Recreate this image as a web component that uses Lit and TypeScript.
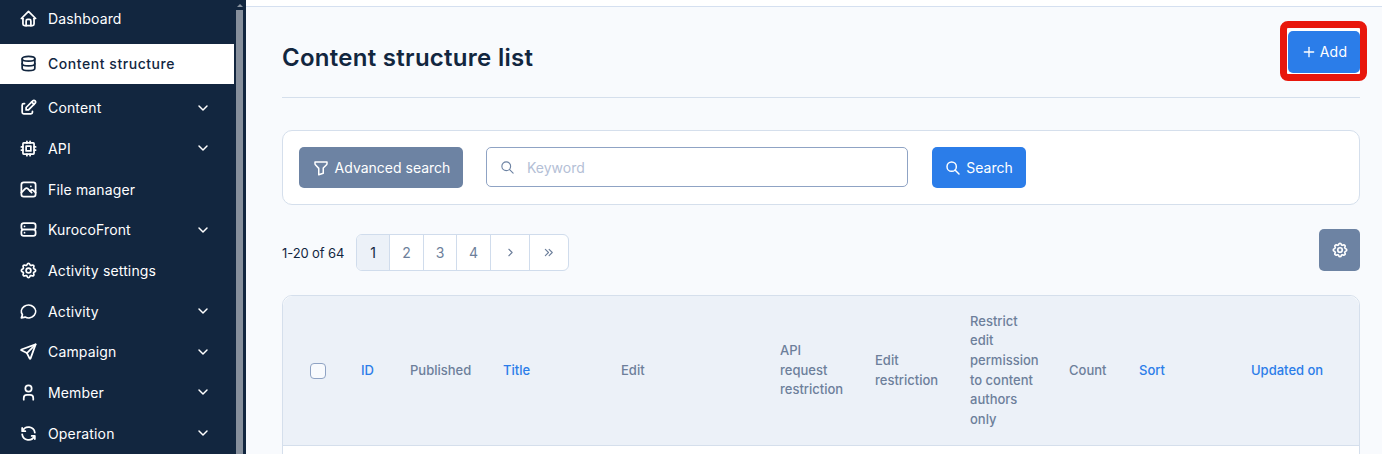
import { LitElement, html, css, svg } from "lit";
import { customElement } from "lit/decorators.js";

const P: Record<string, string[]> = {
  home: ["M5 12l-2 0l9 -9l9 9l-2 0", "M5 12v7a2 2 0 0 0 2 2h10a2 2 0 0 0 2 -2v-7", "M9 21v-6a2 2 0 0 1 2 -2h2a2 2 0 0 1 2 2v6"],
  database: ["M12 6m-8 0a8 3 0 1 0 16 0a8 3 0 1 0 -16 0", "M4 6v6a8 3 0 0 0 16 0v-6", "M4 12v6a8 3 0 0 0 16 0v-6"],
  edit: ["M7 7h-1a2 2 0 0 0 -2 2v9a2 2 0 0 0 2 2h9a2 2 0 0 0 2 -2v-1", "M20.385 6.585a2.1 2.1 0 0 0 -2.97 -2.97l-8.415 8.385v3h3l8.385 -8.415z", "M16 5l3 3"],
  cpu: ["M5 5m0 1a1 1 0 0 1 1 -1h12a1 1 0 0 1 1 1v12a1 1 0 0 1 -1 1h-12a1 1 0 0 1 -1 -1z", "M9 9h6v6h-6z", "M3 10h2", "M3 14h2", "M10 3v2", "M14 3v2", "M21 10h-2", "M21 14h-2", "M14 21v-2", "M10 21v-2"],
  photo: ["M15 8h.01", "M3 6a3 3 0 0 1 3 -3h12a3 3 0 0 1 3 3v12a3 3 0 0 1 -3 3h-12a3 3 0 0 1 -3 -3v-12z", "M3 16l5 -5c.928 -.893 2.072 -.893 3 0l5 5", "M14 14l1 -1c.928 -.893 2.072 -.893 3 0l3 3"],
  server: ["M3 4m0 3a3 3 0 0 1 3 -3h12a3 3 0 0 1 3 3v2a3 3 0 0 1 -3 3h-12a3 3 0 0 1 -3 -3z", "M3 12m0 3a3 3 0 0 1 3 -3h12a3 3 0 0 1 3 3v2a3 3 0 0 1 -3 3h-12a3 3 0 0 1 -3 -3z", "M7 8v.01", "M7 16v.01"],
  settings: ["M10.325 4.317c.426 -1.756 2.924 -1.756 3.35 0a1.724 1.724 0 0 0 2.573 1.066c1.543 -.94 3.31 .826 2.37 2.37a1.724 1.724 0 0 0 1.065 2.572c1.756 .426 1.756 2.924 0 3.35a1.724 1.724 0 0 0 -1.066 2.573c.94 1.543 -.826 3.31 -2.37 2.37a1.724 1.724 0 0 0 -2.572 1.065c-.426 1.756 -2.924 1.756 -3.35 0a1.724 1.724 0 0 0 -2.573 -1.066c-1.543 .94 -3.31 -.826 -2.37 -2.37a1.724 1.724 0 0 0 -1.065 -2.572c-1.756 -.426 -1.756 -2.924 0 -3.35a1.724 1.724 0 0 0 1.066 -2.573c-.94 -1.543 .826 -3.31 2.37 -2.37c1 .608 2.296 .07 2.572 -1.065z", "M9 12a3 3 0 1 0 6 0a3 3 0 0 0 -6 0"],
  message: ["M3 20l1.3 -3.9c-2.324 -3.437 -1.426 -7.872 2.1 -10.374c3.526 -2.501 8.59 -2.296 11.845 .48c3.255 2.777 3.695 7.266 1.029 10.501c-2.666 3.235 -7.615 4.215 -11.574 2.293l-4.7 1"],
  send: ["M10 14l11 -11", "M21 3l-6.5 18a.55 .55 0 0 1 -1 0l-3.5 -7l-7 -3.5a.55 .55 0 0 1 0 -1l18 -6.5"],
  user: ["M8 7a4 4 0 1 0 8 0a4 4 0 0 0 -8 0", "M6 21v-2a4 4 0 0 1 4 -4h4a4 4 0 0 1 4 4v2"],
  refresh: ["M20 11a8.1 8.1 0 0 0 -15.5 -2m-.5 -4v4h4", "M4 13a8.1 8.1 0 0 0 15.5 2m.5 4v-4h-4"],
  chevron: ["M6 9l6 6l6 -6"],
  filter: ["M4 4h16v2.172a2 2 0 0 1 -.586 1.414l-4.414 4.414v7l-6 2v-8.5l-4.48 -4.928a2 2 0 0 1 -.52 -1.345v-2.227z"],
  search: ["M10 10m-7 0a7 7 0 1 0 14 0a7 7 0 1 0 -14 0", "M21 21l-6 -6"],
  plus: ["M12 5v14", "M5 12h14"],
  next: ["M9 6l6 6l-6 6"],
  last: ["M7 7l5 5l-5 5", "M13 7l5 5l-5 5"],
};

const icon = (name: string, size: number, sw = 2) => html`<svg
  width=${size} height=${size} viewBox="0 0 24 24" fill="none" stroke="currentColor"
  stroke-width=${sw} stroke-linecap="round" stroke-linejoin="round">
  ${P[name].map((d) => svg`<path d=${d}></path>`)}
</svg>`;

const NAV: { label: string; icon: string; sub?: boolean; active?: boolean }[] = [
  { label: "Dashboard", icon: "home" },
  { label: "Content structure", icon: "database", active: true },
  { label: "Content", icon: "edit", sub: true },
  { label: "API", icon: "cpu", sub: true },
  { label: "File manager", icon: "photo" },
  { label: "KurocoFront", icon: "server", sub: true },
  { label: "Activity settings", icon: "settings" },
  { label: "Activity", icon: "message", sub: true },
  { label: "Campaign", icon: "send", sub: true },
  { label: "Member", icon: "user", sub: true },
  { label: "Operation", icon: "refresh", sub: true },
];

@customElement("app-root")
export class AppRoot extends LitElement {
  static styles = css`
    :host {
      display: flex;
      height: 100vh;
      overflow: hidden;
      background: #f8fafd;
      color: #12263f;
      font-family: Inter, "Liberation Sans", sans-serif;
      font-size: 14px;
    }
    * { box-sizing: border-box; }
    svg { display: block; flex: none; }

    .side {
      flex: none;
      width: 246px;
      background: #12263f;
      display: flex;
      overflow: hidden;
    }
    .nav {
      width: 234px;
      flex: none;
      margin-top: -1.7px;
      display: flex;
      flex-direction: column;
    }
    .item {
      flex: none;
      height: 40.67px;
      display: flex;
      align-items: center;
      padding: 0 23.5px 0 19px;
      color: #fff;
      letter-spacing: 0.15px;
    }
    .item .label { margin-left: 10px; flex: 1; }
    .item.active {
      background: #fff;
      color: #12263f;
      font-weight: 500;
      letter-spacing: 0.55px;
      height: 40px;
      margin: 4.7px 0 3.8px;
    }
    .item .chev { width: 16px; }
    .scroll {
      flex: none;
      width: 7px;
      margin-left: 2px;
      display: flex;
      flex-direction: column;
      align-items: center;
    }
    .arrow {
      flex: none;
      height: 10px;
      width: 100%;
      display: flex;
      align-items: center;
      justify-content: center;
    }
    .arrow i {
      border: 3px solid transparent;
      border-top: 0;
      border-bottom: 3px solid #8a93a0;
    }
    .thumb { flex: 1; width: 100%; background: #868f9c; }

    .main { flex: 1; min-width: 0; display: flex; flex-direction: column; }
    .top { flex: none; height: 7px; background: #fff; border-bottom: 1px solid #d5e0f0; }
    .body { padding: 0 22px 0 36px; display: flex; flex-direction: column; }
    .head {
      height: 91px;
      border-bottom: 1px solid #d5dfec;
      display: flex;
      align-items: center;
      justify-content: space-between;
    }
    h1 {
      margin: 10px 0 0;
      font-size: 24px;
      font-weight: 600;
      color: #12263f;
      letter-spacing: 0.28px;
    }
    .btn {
      display: inline-flex;
      align-items: center;
      justify-content: center;
      height: 41px;
      border-radius: 5px;
      color: #fff;
      background: #2b7de9;
      font-size: 14px;
    }
    .add-wrap { position: relative; }
    .add {
      width: 72px;
      height: 42px;
      gap: 3px;
      padding-bottom: 1px;
      letter-spacing: 0.3px;
      box-shadow: 0 0 0 3px #fff;
    }
    .mark {
      position: absolute;
      inset: -10px -7px -8px -8px;
      border: 7px solid #e8170c;
      border-radius: 8px;
      pointer-events: none;
    }

    .card {
      margin-top: 32px;
      height: 75px;
      background: #fff;
      border: 1px solid #d5dfec;
      border-radius: 10px;
      display: flex;
      align-items: flex-start;
      padding: 16px;
    }
    .adv { width: 164px; background: #6d83a3; gap: 5px; }
    .kw {
      margin-left: 23px;
      width: 422px;
      height: 40px;
      border: 1px solid #8fa3c4;
      border-radius: 5px;
      display: flex;
      align-items: center;
      padding-left: 13px;
      gap: 12px;
      color: #6d83a3;
    }
    .kw span { color: #b4c0d6; }
    .go { margin-left: 24px; width: 94px; gap: 5px; }

    .pager-row {
      margin-top: 24px;
      height: 42px;
      display: flex;
      align-items: flex-end;
    }
    .count {
      font-size: 13px;
      letter-spacing: -0.1px;
      color: #12263f;
      width: 74px;
      height: 37px;
      display: flex;
      align-items: center;
    }
    .pager {
      display: flex;
      height: 37px;
      background: #fff;
      border: 1px solid #d0dcec;
      border-radius: 6px;
      overflow: hidden;
      color: #6d7f9b;
    }
    .cell {
      display: flex;
      align-items: center;
      justify-content: center;
      border-left: 1px solid #d0dcec;
      width: 34px;
    }
    .cell.first { border-left: 0; background: #ecf1f8; color: #12263f; width: 32px; }
    .cell.three { width: 33px; }
    .cell.wide { width: 39px; }
    .cell.last { width: 39px; padding-right: 2px; }
    .gear { margin-left: auto; width: 41px; height: 42px; background: #6d83a3; }

    .table {
      margin-top: 24px;
      background: #fff;
      border: 1px solid #d5dfec;
      border-radius: 10px 10px 0 0;
      height: 180px;
    }
    .thead {
      height: 150px;
      background: #ecf1f8;
      border-bottom: 1px solid #d5dfec;
      border-radius: 10px 10px 0 0;
      display: grid;
      grid-template-columns: 66px 49px 93px 118px 159px 95px 95px 99px 70px 112px 1fr;
      align-items: center;
      font-size: 13px;
      font-weight: 500;
      line-height: 19.6px;
      color: #6d7f9b;
    }
    .th { padding-left: 12px; white-space: nowrap; }
    .th.link { color: #2b7de9; }
    .chk { padding-left: 27px; display: flex; }
    .box {
      width: 16px;
      height: 16px;
      background: #f8fafd;
      border: 1px solid #8fa3c4;
      border-radius: 4px;
    }
  `;

  render() {
    return html`
      <aside class="side">
        <nav class="nav">
          ${NAV.map(
            (n) => html`<div class="item ${n.active ? "active" : ""}">
              ${icon(n.icon, 19, 2.2)}
              <span class="label">${n.label}</span>
              ${n.sub ? html`<span class="chev">${icon("chevron", 16, 2.2)}</span>` : ""}
            </div>`
          )}
        </nav>
        <div class="scroll">
          <div class="arrow"><i></i></div>
          <div class="thumb"></div>
        </div>
      </aside>
      <main class="main">
        <div class="top"></div>
        <div class="body">
          <header class="head">
            <h1>Content structure list</h1>
            <div class="add-wrap">
              <div class="btn add">${icon("plus", 16)}<span>Add</span></div>
              <div class="mark"></div>
            </div>
          </header>
          <section class="card">
            <div class="btn adv">${icon("filter", 18, 2)}<span>Advanced search</span></div>
            <div class="kw">${icon("search", 15, 1.8)}<span>Keyword</span></div>
            <div class="btn go">${icon("search", 16, 2.2)}<span>Search</span></div>
          </section>
          <div class="pager-row">
            <div class="count">1-20 of 64</div>
            <div class="pager">
              <div class="cell first">1</div>
              <div class="cell">2</div>
              <div class="cell three">3</div>
              <div class="cell">4</div>
              <div class="cell wide">${icon("next", 13, 2)}</div>
              <div class="cell last">${icon("last", 15, 1.8)}</div>
            </div>
            <div class="btn gear">${icon("settings", 18, 2.2)}</div>
          </div>
          <section class="table">
            <div class="thead">
              <div class="th chk"><span class="box"></span></div>
              <div class="th link">ID</div>
              <div class="th">Published</div>
              <div class="th link">Title</div>
              <div class="th">Edit</div>
              <div class="th">API<br />request<br />restriction</div>
              <div class="th">Edit<br />restriction</div>
              <div class="th">Restrict<br />edit<br />permission<br />to content<br />authors<br />only</div>
              <div class="th">Count</div>
              <div class="th link">Sort</div>
              <div class="th link">Updated on</div>
            </div>
          </section>
        </div>
      </main>
    `;
  }
}
